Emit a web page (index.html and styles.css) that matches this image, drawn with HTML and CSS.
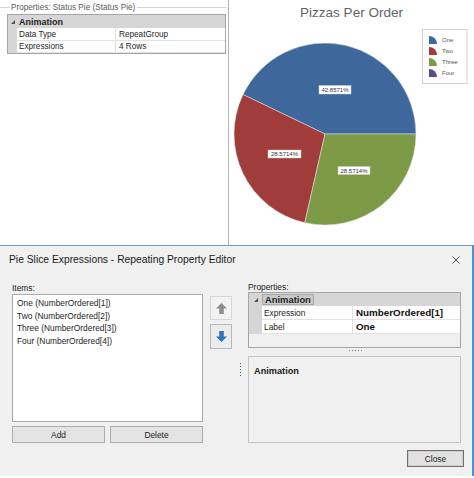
FILE: index.html
```html
<!DOCTYPE html>
<html>
<head>
<meta charset="utf-8">
<link rel="stylesheet" href="styles.css">
</head>
<body>
<div class="top">
  <section class="props-panel">
    <div class="group-title"><span>Properties: Status Pie (Status Pie)</span></div>
    <div class="pgrid small">
      <div class="pg-cat"><span class="pg-gutter"><svg class="tri" viewBox="0 0 4 4" width="4" height="4"><path d="M0 4L4 0V4Z"/></svg></span><span class="pg-cat-name">Animation</span></div>
      <div class="pg-row"><span class="pg-gutter"></span><span class="pg-name">Data Type</span><span class="pg-val">RepeatGroup</span></div>
      <div class="pg-row"><span class="pg-gutter"></span><span class="pg-name">Expressions</span><span class="pg-val">4 Rows</span></div>
    </div>
  </section>
  <section class="chart">
    <div class="chart-title">Pizzas Per Order</div>
    <svg class="chart-canvas" viewBox="229 26 245 219" width="245" height="219">
      <g class="slices">
        <path fill="#3e679b" d="M325 134L416 134A91 91 0 0 0 243.01 94.52Z"/>
        <path fill="#a03c3a" d="M325 134L243.01 94.52A91 91 0 0 0 304.75 222.72Z"/>
        <path fill="#7d9a46" d="M325 134L304.75 222.72A91 91 0 0 0 416 134Z"/>
      </g>
      <g class="lbl">
        <rect x="319" y="85.5" width="32" height="8.5"/><text x="335" y="92">42.8571%</text>
        <rect x="268" y="150" width="33" height="8"/><text x="284.5" y="156.3">28.5714%</text>
        <rect x="338" y="166.5" width="32" height="8"/><text x="354" y="172.8">28.5714%</text>
      </g>
      <g class="legend">
        <rect class="legend-box" x="422.5" y="29.5" width="44.5" height="54"/>
        <path fill="#3e679b" d="M429 44V36A8 8 0 0 1 437 44Z"/><text x="442" y="42.2">One</text>
        <path fill="#a03c3a" d="M429 55V47A8 8 0 0 1 437 55Z"/><text x="442" y="53.2">Two</text>
        <path fill="#7d9a46" d="M429 66V58A8 8 0 0 1 437 66Z"/><text x="442" y="64.2">Three</text>
        <path fill="#5e4a93" d="M429 77V69A8 8 0 0 1 437 77Z"/><text x="442" y="75.2">Four</text>
      </g>
    </svg>
  </section>
</div>
<div class="dialog">
  <div class="titlebar">
    <span class="title">Pie Slice Expressions - Repeating Property Editor</span>
    <svg class="close-x" viewBox="0 0 8 8" width="8" height="8"><path d="M0.5 0.5L7.5 7.5M7.5 0.5L0.5 7.5"/></svg>
  </div>
  <div class="dlg-body">
    <div class="left-col">
      <div class="label items-label">Items:</div>
      <div class="list-row">
        <div class="listbox">
          <div class="item">One (NumberOrdered[1])</div>
          <div class="item">Two (NumberOrdered[2])</div>
          <div class="item">Three (NumberOrdered[3])</div>
          <div class="item">Four (NumberOrdered[4])</div>
        </div>
        <div class="move-btns">
          <div class="arrow-btn disabled"><svg viewBox="0 0 12 12" width="11" height="11"><path d="M6 0L12 6H8.5V12H3.5V6H0Z"/></svg></div>
          <div class="arrow-btn"><svg viewBox="0 0 12 12" width="11" height="11"><path d="M6 12L12 6H8.5V0H3.5V6H0Z"/></svg></div>
        </div>
      </div>
      <div class="btn-row"><div class="btn">Add</div><div class="btn">Delete</div></div>
    </div>
    <div class="vsplit"><span class="vdots"></span></div>
    <div class="right-col">
      <div class="label props-label">Properties:</div>
      <div class="pgrid big">
        <div class="pg-cat"><span class="pg-gutter"><svg class="tri" viewBox="0 0 4 4" width="4" height="4"><path d="M0 4L4 0V4Z"/></svg></span><span class="pg-cat-name focused">Animation</span></div>
        <div class="pg-row"><span class="pg-gutter"></span><span class="pg-name">Expression</span><span class="pg-val strong">NumberOrdered[1]</span></div>
        <div class="pg-row"><span class="pg-gutter"></span><span class="pg-name">Label</span><span class="pg-val strong">One</span></div>
      </div>
      <div class="hsplit"><span class="hdots"></span></div>
      <div class="desc"><span class="desc-title">Animation</span></div>
    </div>
  </div>
  <div class="footer"><div class="btn close-btn">Close</div></div>
</div>
</body>
</html>
```

FILE: styles.css
```css
* { box-sizing: border-box; }
html, body { margin: 0; padding: 0; }
body {
  width: 474px;
  height: 478px;
  overflow: hidden;
  background: #fff;
  font-family: "Liberation Sans", Arial, sans-serif;
  color: #1e1e1e;
}

/* ---------- top area ---------- */
.top { display: flex; height: 245px; }

.props-panel {
  width: 229px;
  flex: none;
  border-right: 1px solid #b4b4b4;
  padding: 0 2px 0 7px;
  font-size: 8.2px;
}
.group-title {
  display: flex;
  align-items: center;
  height: 14px;
  margin-left: -7px;
  color: #5a5a5a;
}
.group-title::before { content: ""; width: 10px; height: 1px; background: #d4d4d4; }
.group-title::after { content: ""; flex: 1; height: 1px; background: #d4d4d4; }
.group-title span { padding: 0 2px 0 1px; }

.pgrid { border: 1px solid #a6a6a6; background: #fff; }
.pg-cat { display: flex; align-items: stretch; background: #d6d6d6; font-weight: bold; }
.pg-cat-name { display: flex; align-items: center; padding-left: 2px; }
.pg-row { display: grid; }
.pg-gutter { background: #d6d6d6; display: flex; align-items: center; justify-content: center; }
.tri { fill: #555; }
.pg-name, .pg-val {
  display: flex;
  align-items: center;
  padding-left: 2px;
  border-bottom: 1px solid #e2e2e2;
  white-space: nowrap;
}
.pg-val { border-left: 1px solid #e2e2e2; padding-left: 3px; }

.small .pg-cat { height: 13px; font-size: 9px; }
.small .pg-cat .pg-gutter { width: 9px; }
.small .pg-row { grid-template-columns: 9px 98px 1fr; height: 13px; }
.small .pg-row:last-child { height: 12px; }

/* chart */
.chart { flex: 1; display: flex; flex-direction: column; }
.chart-title {
  height: 26px;
  display: flex;
  align-items: center;
  justify-content: center;
  font-size: 13.5px;
  color: #646464;
  padding-bottom: 1px;
}
.chart-canvas { display: block; }
.slices path { stroke: #e9e9e9; stroke-width: 0.5; }
.lbl rect { fill: #fff; stroke: #c8c8c8; stroke-width: 0.5; }
.lbl text { font-family: "Liberation Sans", Arial, sans-serif; font-size: 6px; fill: #333; text-anchor: middle; }
.legend-box { fill: #fff; stroke: #d2d2d2; stroke-width: 1; }
.legend text { font-family: "Liberation Sans", Arial, sans-serif; font-size: 6px; fill: #555; }

/* ---------- dialog ---------- */
.dialog {
  height: 231px;
  background: #f0f0f0;
  border-top: 1px solid #6a9fd0;
  border-right: 2px solid #4a92d6;
  display: flex;
  flex-direction: column;
  font-size: 8.4px;
}
.titlebar {
  height: 26px;
  flex: none;
  display: flex;
  align-items: center;
  justify-content: space-between;
  padding: 1px 12px 0 9px;
}
.title { font-size: 10.3px; color: #1a1a1a; }
.close-x { stroke: #3a3a3a; stroke-width: 0.9; fill: none; }

.dlg-body {
  display: flex;
  height: 171px;
  padding: 9px 0 0 12px;
}
.left-col { width: 220px; display: flex; flex-direction: column; }
.label { color: #222; display: flex; align-items: center; }
.items-label { height: 13px; }
.props-label { height: 11px; }

.list-row { display: flex; gap: 7px; }
.listbox {
  width: 192px;
  height: 128px;
  background: #fff;
  border: 1px solid #aaa;
  padding: 2px 4px;
}
.item { height: 12.5px; line-height: 12.5px; white-space: nowrap; }
.move-btns { display: flex; flex-direction: column; gap: 4px; padding-top: 2px; }
.arrow-btn {
  width: 22px;
  height: 25px;
  border: 1px solid #b9b9b9;
  background: #ececec;
  display: flex;
  align-items: center;
  justify-content: center;
}
.arrow-btn svg { fill: #2f73bf; }
.arrow-btn.disabled { height: 24px; border-color: #d6d6d6; background: #f3f3f3; }
.arrow-btn.disabled svg { fill: #8e8e8e; }

.btn-row { display: flex; gap: 5px; margin-top: 4px; }
.btn {
  width: 93px;
  height: 17px;
  border: 1px solid #adadad;
  background: #e4e4e4;
  display: flex;
  align-items: center;
  justify-content: center;
  color: #222;
}

.vsplit { width: 16px; display: flex; align-items: center; justify-content: center; padding-top: 14px; }
.vdots {
  width: 1px;
  height: 13px;
  background: repeating-linear-gradient(to bottom, #555 0 1px, transparent 1px 3px);
}

.right-col { width: 213px; display: flex; flex-direction: column; }
.big { height: 56px; background: #f0f0f0; }
.big .pg-cat { height: 13px; font-size: 9.4px; }
.big .pg-cat .pg-gutter { width: 13px; }
.big .pg-row { grid-template-columns: 13px 90px 1fr; height: 14px; background: #fff; }
.big .pg-cat-name.focused { margin: 1px 0; padding: 0 2px; background: #c9c9c9; border: 1px solid #a9a9a9; }
.strong { font-weight: bold; font-size: 9.8px; color: #111; }

.hsplit { height: 8px; display: flex; justify-content: center; align-items: center; padding-bottom: 3px; padding-left: 2px; }
.hdots {
  width: 13px;
  height: 1px;
  background: repeating-linear-gradient(to right, #777 0 1px, transparent 1px 3px);
}
.desc {
  height: 87px;
  border: 1px solid #c4c4c4;
  background: #f0f0f0;
  padding: 9px 5px;
}
.desc-title { font-weight: bold; font-size: 9.2px; color: #222; }

.footer { display: flex; justify-content: flex-end; padding: 7px 8px 0 0; }
.close-btn { width: 57px; border: 1px solid #6f6f6f; box-shadow: inset 0 0 0 1px #cfcfcf; background: #e1e1e1; }
```
